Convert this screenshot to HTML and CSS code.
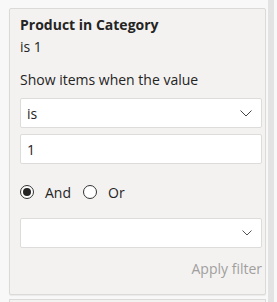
FILE: index.html
```html
<!DOCTYPE html>
<html>

<head>
    <title>Filter card</title>
    <link rel="stylesheet" href="styles.css">
</head>

<body>
    <div class="pane">
        <div class="cards">
            <div class="filter-card">
                <div class="card-title">Product in Category</div>
                <div class="card-summary">is 1</div>
                <div class="card-label">Show items when the value</div>
                <div class="field select-field">
                    <span>is</span>
                    <svg class="chevron" viewBox="0 0 12 7" aria-hidden="true">
                        <path d="M0.5 0.5 L6 6 L11.5 0.5" fill="none" stroke="#444" stroke-width="1" />
                    </svg>
                </div>
                <div class="field">
                    <span>1</span>
                </div>
                <div class="radio-row">
                    <label class="radio"><span class="dot checked"></span>And</label>
                    <label class="radio"><span class="dot"></span>Or</label>
                </div>
                <div class="field select-field">
                    <span></span>
                    <svg class="chevron small" viewBox="0 0 10 6" aria-hidden="true">
                        <path d="M0.5 0.5 L5 5 L9.5 0.5" fill="none" stroke="#555" stroke-width="1" />
                    </svg>
                </div>
                <div class="apply">Apply filter</div>
            </div>
            <div class="next-card"></div>
        </div>
        <div class="scroll-track"></div>
    </div>
</body>

</html>
```

FILE: styles.css
```css
body {
    margin: 0;
    padding: 0;
    background-color: #f8f8f8;
    font-family: "Open Sans", "Noto Sans", sans-serif;
    color: #252423;
}

.pane {
    display: flex;
    height: 302px;
    overflow: hidden;
}

.cards {
    width: 257px;
    margin-left: 9px;
    padding-top: 8px;
}

.filter-card {
    background-color: #f3f2f1;
    border: 1px solid #dcdad8;
    border-radius: 2px;
    padding: 6px 3px 15px 10px;
    box-shadow: 0 1px 1px rgba(0, 0, 0, 0.06);
}

.card-title {
    font-size: 14px;
    font-weight: 700;
    line-height: 20px;
}

.card-summary {
    font-size: 14px;
    line-height: 20px;
    margin-top: 2px;
}

.card-label {
    font-size: 14px;
    line-height: 20px;
    margin-top: 13px;
    margin-bottom: 8px;
}

.field {
    display: flex;
    align-items: center;
    justify-content: space-between;
    height: 28px;
    background-color: #ffffff;
    border: 1px solid #dedcda;
    border-radius: 2px;
    padding: 0 9px 0 6px;
    font-size: 14px;
    margin-bottom: 6px;
}

.chevron {
    width: 12px;
    height: 7px;
}

.chevron.small {
    width: 10px;
    height: 6px;
}

.radio-row {
    display: flex;
    align-items: center;
    gap: 12px;
    height: 20px;
    margin: 18px 0 16px;
    font-size: 14px;
}

.radio {
    display: flex;
    align-items: center;
    gap: 11px;
}

.dot {
    width: 12px;
    height: 12px;
    border: 1px solid #333;
    border-radius: 50%;
    background-color: #ffffff;
    position: relative;
}

.dot.checked::after {
    content: "";
    position: absolute;
    left: 2px;
    top: 2px;
    width: 8px;
    height: 8px;
    border-radius: 50%;
    background-color: #252423;
}

.apply {
    text-align: right;
    color: #a19f9d;
    font-size: 14px;
    line-height: 20px;
    margin-top: 11px;
}

.next-card {
    margin-top: 4px;
    height: 20px;
    background-color: #f3f2f1;
    border: 1px solid #dcdad8;
}

.scroll-track {
    width: 6px;
    margin-left: 2px;
    background-color: #e3e3e3;
}
```
